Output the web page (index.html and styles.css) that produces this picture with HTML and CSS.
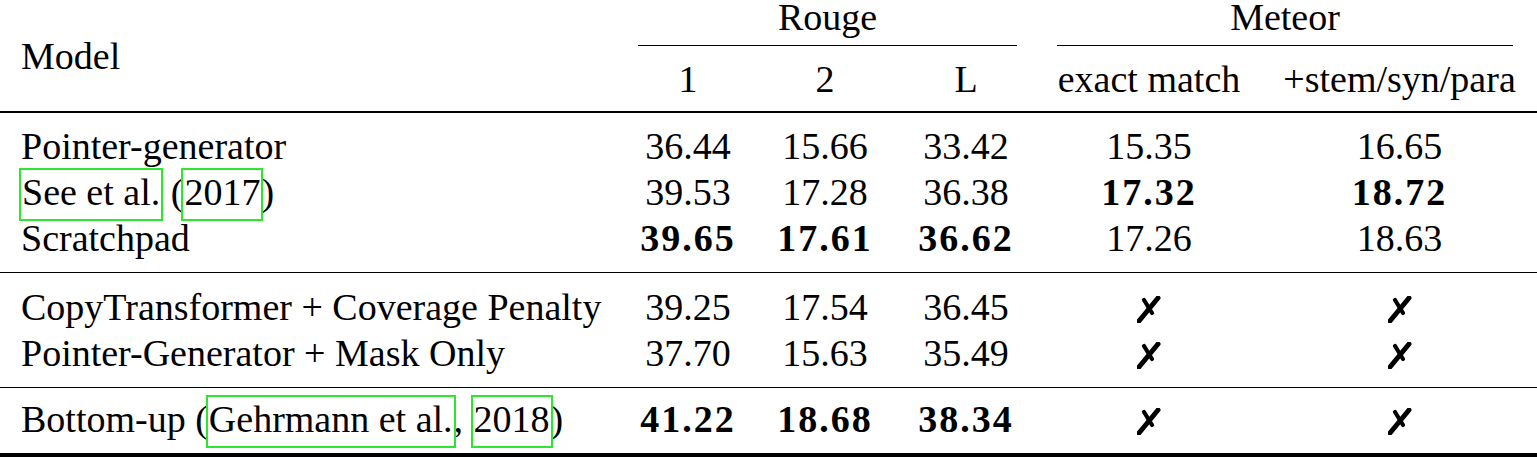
FILE: index.html
```html
<!DOCTYPE html>
<html lang="en">
<head>
    <meta charset="UTF-8">
    <meta name="viewport" content="width=device-width, initial-scale=1.0">
    <title>Summarization Results</title>
    <link rel="stylesheet" href="styles.css">
</head>
<body>
    <table class="results">
        <colgroup>
            <col class="col-model">
            <col class="col-r1">
            <col class="col-r2">
            <col class="col-rl">
            <col class="col-exact">
            <col class="col-stem">
        </colgroup>
        <thead>
            <tr class="group-row">
                <th rowspan="2" class="model-head">Model</th>
                <th colspan="3" class="group"><div class="group-label rouge">Rouge</div></th>
                <th colspan="2" class="group"><div class="group-label meteor">Meteor</div></th>
            </tr>
            <tr class="sub-row">
                <th>1</th>
                <th>2</th>
                <th>L</th>
                <th>exact match</th>
                <th>+stem/syn/para</th>
            </tr>
        </thead>

        <tbody class="block first">
            <tr>
                <td class="model">Pointer-generator</td>
                <td>36.44</td>
                <td>15.66</td>
                <td>33.42</td>
                <td>15.35</td>
                <td>16.65</td>
            </tr>
            <tr>
                <td class="model"><span class="cite">See et al.</span> (<span class="cite">2017</span>)</td>
                <td>39.53</td>
                <td>17.28</td>
                <td>36.38</td>
                <td class="best">17.32</td>
                <td class="best">18.72</td>
            </tr>
            <tr>
                <td class="model">Scratchpad</td>
                <td class="best">39.65</td>
                <td class="best">17.61</td>
                <td class="best">36.62</td>
                <td>17.26</td>
                <td>18.63</td>
            </tr>
        </tbody>

        <tbody class="block second">
            <tr>
                <td class="model">CopyTransformer + Coverage Penalty</td>
                <td>39.25</td>
                <td>17.54</td>
                <td>36.45</td>
                <td class="na"><svg class="cross" viewBox="0 0 24 27"><path d="M2 25 L21 2"/><path class="short" d="M7 4 L15 17"/></svg></td>
                <td class="na"><svg class="cross" viewBox="0 0 24 27"><path d="M2 25 L21 2"/><path class="short" d="M7 4 L15 17"/></svg></td>
            </tr>
            <tr>
                <td class="model">Pointer-Generator + Mask Only</td>
                <td>37.70</td>
                <td>15.63</td>
                <td>35.49</td>
                <td class="na"><svg class="cross" viewBox="0 0 24 27"><path d="M2 25 L21 2"/><path class="short" d="M7 4 L15 17"/></svg></td>
                <td class="na"><svg class="cross" viewBox="0 0 24 27"><path d="M2 25 L21 2"/><path class="short" d="M7 4 L15 17"/></svg></td>
            </tr>
        </tbody>

        <tbody class="block last">
            <tr>
                <td class="model">Bottom-up (<span class="cite">Gehrmann et al.</span>, <span class="cite">2018</span>)</td>
                <td class="best">41.22</td>
                <td class="best">18.68</td>
                <td class="best">38.34</td>
                <td class="na"><svg class="cross" viewBox="0 0 24 27"><path d="M2 25 L21 2"/><path class="short" d="M7 4 L15 17"/></svg></td>
                <td class="na"><svg class="cross" viewBox="0 0 24 27"><path d="M2 25 L21 2"/><path class="short" d="M7 4 L15 17"/></svg></td>
            </tr>
        </tbody>
    </table>
</body>
</html>
```

FILE: styles.css
```css
* {
    margin: 0;
    padding: 0;
    box-sizing: border-box;
}

body {
    font-family: 'Liberation Serif', 'Times New Roman', serif;
    font-size: 38px;
    color: #000;
    background: #fff;
    overflow: hidden;
}

.results {
    width: 1537px;
    border-collapse: separate;
    border-spacing: 0;
    table-layout: fixed;
}

.col-model { width: 622px; }
.col-r1 { width: 132px; }
.col-r2 { width: 142px; }
.col-rl { width: 140px; }
.col-exact { width: 226px; }
.col-stem { width: 275px; }

th, td {
    font-weight: normal;
    text-align: center;
    line-height: 46px;
    white-space: nowrap;
}

/* header */
.group-row .model-head {
    text-align: left;
    padding-left: 21px;
    vertical-align: middle;
    border-bottom: 2px solid #000;
}

.group-row .group {
    vertical-align: top;
}

.group-label {
    line-height: 34px;
    padding-bottom: 11px;
    border-bottom: 1.5px solid #000;
}

.group-label.rouge {
    margin: 0 19px 0 16px;
}

.group-label.meteor {
    margin: 0 24px 0 21px;
}

.sub-row th {
    padding-top: 10px;
    padding-bottom: 9px;
    border-bottom: 2px solid #000;
}

/* body blocks */
.model {
    text-align: left;
    padding-left: 21px;
}

.block.first tr:first-child td { padding-top: 10px; }
.block.first tr:last-child td {
    padding-bottom: 11px;
    border-bottom: 1.5px solid #000;
}

.block.second tr:first-child td { padding-top: 11px; }
.block.second tr:last-child td {
    padding-bottom: 11px;
    border-bottom: 1.5px solid #000;
}

.block.last tr:first-child td {
    padding-top: 8px;
    padding-bottom: 11px;
    border-bottom: 6px solid #000;
}

.best {
    font-weight: bold;
    letter-spacing: 2px;
}

.cross {
    width: 24px;
    height: 27px;
    vertical-align: -3px;
    fill: none;
    stroke: #000;
    stroke-width: 5;
    stroke-linecap: round;
}

.cross .short {
    stroke-width: 4.2;
}

.cite {
    outline: 2.5px solid #2fe52f;
    padding: 1px 1px 6px;
}
```
